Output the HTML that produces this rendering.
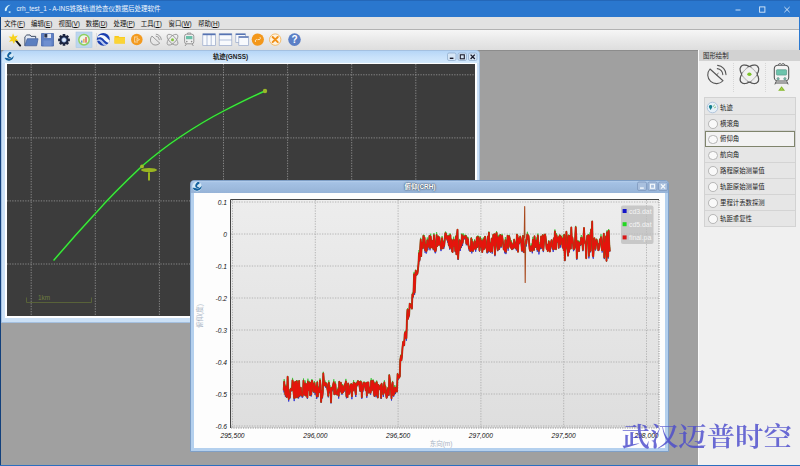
<!DOCTYPE html>
<html lang="zh">
<head>
<meta charset="utf-8">
<title>crh_test_1 - A-INS铁路轨道检查仪数据后处理软件</title>
<style>
html,body{margin:0;padding:0;}
body{width:800px;height:466px;position:relative;overflow:hidden;background:#a0a0a0;
 font-family:"Liberation Sans","Noto Sans CJK SC",sans-serif;font-size:6.4px;color:#111;}
.abs{position:absolute;}
#titlebar{left:0;top:0;width:800px;height:17.4px;background:#2a77ce;border-top:1px solid #2467b8;box-sizing:border-box;color:#fff;}
#titlebar .t{position:absolute;left:16.5px;top:2.3px;color:#eef5fd;font-size:6.5px;line-height:12px;white-space:nowrap;letter-spacing:0px;}
#menubar{left:1px;top:17px;width:798px;height:12px;background:#e2e2e2;border-bottom:1px solid #b2b2b2;}
#menubar span{position:absolute;top:1px;line-height:12px;font-size:6.4px;white-space:nowrap;color:#111;}
#toolbar{left:1px;top:30px;width:798px;height:20px;background:linear-gradient(#f6f6f6,#e9e9e9 50%,#dedede);border-bottom:1px solid #8c8c8c;}
#leftedge{left:0;top:17px;width:1px;height:449px;background:#12407c;}
#rightedge{left:799px;top:17px;width:1px;height:449px;background:#2b79d1;}
#bottomedge{left:0;top:465px;width:800px;height:1px;background:#2b6fc0;}
#panel{left:698px;top:50px;width:101px;height:415px;background:#f0f0f0;border-left:1px solid #fafafa;}
#panel .hd{position:absolute;left:0;top:0;width:101px;height:11px;background:#d2d2d2;}
#panel .hd span{position:absolute;left:4px;top:0;line-height:11px;font-size:6.4px;color:#222;}
.list{position:absolute;left:5px;top:47px;width:92px;height:129.5px;background:#e6e6e6;border:1px solid #d2d2d2;box-sizing:border-box;}
.item{position:absolute;left:0;width:90px;height:15.9px;border-bottom:1px solid #d4d4d4;box-sizing:border-box;}
.item i{position:absolute;left:2.9px;top:3.3px;width:7.8px;height:7.8px;border-radius:50%;background:#f9f9f9;border:0.8px solid #b4b4b4;box-sizing:content-box;}
.item span{position:absolute;left:15px;top:0;line-height:15.9px;font-size:6.4px;white-space:nowrap;color:#222;}
.item.sel{background:#f2f2f2;outline:1px solid #7f846c;outline-offset:-1px;border-bottom:none;}
.win{box-sizing:border-box;}
</style>
</head>
<body>
<!-- main title bar -->
<div id="titlebar" class="abs">
 <svg class="abs" style="left:0;top:0" width="16" height="17" viewBox="0 0 16 17"><path d="M10.6 3.8 C6.4 4.4 4.2 7.4 5 10.2 L6.9 9.6 C6.6 7.6 7.8 5.4 10.6 3.8Z" fill="#d2f0fa"/><path d="M8.8 10.2 L10.8 10.6 L10.2 12.2 L8.6 11.6Z" fill="#bfe8f8"/></svg>
 <div class="t">crh_test_1 - A-INS铁路轨道检查仪数据后处理软件</div>
 <svg class="abs" style="left:730px;top:0" width="70" height="17" viewBox="0 0 70 17">
  <line x1="5.5" y1="9" x2="10.5" y2="9" stroke="#dcebfa" stroke-width="0.9"/>
  <rect x="29.6" y="5.9" width="5.3" height="5.3" fill="none" stroke="#dcebfa" stroke-width="0.9"/>
  <path d="M54.4 6 L59.6 11.2 M59.6 6 L54.4 11.2" stroke="#dcebfa" stroke-width="0.9" fill="none"/>
 </svg>
</div>
<div id="leftedge" class="abs"></div>
<div id="rightedge" class="abs"></div>

<!-- menu bar -->
<div id="menubar" class="abs">
 <span style="left:3.2px">文件(<u>F</u>)</span>
 <span style="left:30.0px">编辑(<u>E</u>)</span>
 <span style="left:57.5px">视图(<u>V</u>)</span>
 <span style="left:84.8px">数据(<u>D</u>)</span>
 <span style="left:112.5px">处理(<u>P</u>)</span>
 <span style="left:139.8px">工具(<u>T</u>)</span>
 <span style="left:167.5px">窗口(<u>W</u>)</span>
 <span style="left:197.0px">帮助(<u>H</u>)</span>
</div>

<!-- toolbar -->
<div id="toolbar" class="abs">
<svg class="abs" style="left:-1px;top:0" width="320" height="19" viewBox="0 30 320 19">
 <!-- wand -->
 <path d="M15.5 40 L20.2 45.6" stroke="#111" stroke-width="1.9" stroke-linecap="round"/>
 <path transform="translate(2 0.8)" d="M11 32.5 L12.3 35.8 L15.8 34.6 L13.8 37.6 L16.5 40 L13 40 L12 43.2 L10.4 40.2 L7 41 L9 38.2 L6.6 35.6 L10 36Z" fill="#f7d21c"/>
 <!-- open folder -->
 <g transform="translate(0 0.6) translate(31 40) scale(0.94) translate(-31 -40)"><path d="M24.5 45.5 L24.5 36 L26.5 34 L30 34 L31 35.5 L36 35.5 L36 38" fill="#e4eaf4" stroke="#36445e" stroke-width="1"/>
 <path d="M24.5 45.5 L27 38 L38.5 38 L37 45.5Z" fill="#5b7fc0" stroke="#46629c" stroke-width="0.8"/></g>
 <!-- floppy -->
 <path d="M41.5 33.5 L53.5 33.5 L53.5 46 L41.5 46Z" fill="#5f80c4" stroke="#4768ac" stroke-width="0.8"/>
 <rect x="44" y="33.8" width="7" height="4.2" fill="#dfe6f4"/>
 <rect x="44.3" y="34" width="3" height="3.6" fill="#2a3552"/>
 <rect x="43.5" y="40.5" width="8" height="5.3" fill="#6f8fd0"/>
 <!-- gear -->
 <g transform="translate(64 39.9) scale(0.84)">
  <g fill="#1c2540">
   <rect x="-1.6" y="-7" width="3.2" height="14" rx="0.6"/>
   <rect x="-1.6" y="-7" width="3.2" height="14" rx="0.6" transform="rotate(45)"/>
   <rect x="-1.6" y="-7" width="3.2" height="14" rx="0.6" transform="rotate(90)"/>
   <rect x="-1.6" y="-7" width="3.2" height="14" rx="0.6" transform="rotate(135)"/>
   <circle r="5.3"/>
  </g>
  <circle r="2.7" fill="#dfeaf8"/>
  <circle r="2.7" fill="none" stroke="#7fa0d8" stroke-width="0.8"/>
 </g>
 <!-- chart (checked) -->
 <rect x="76" y="32" width="16" height="15.5" fill="#bcd6ee" stroke="#a9c8e6" stroke-width="0.6"/>
 <circle cx="84" cy="39.7" r="5.2" fill="#eef6e6" stroke="#8fd060" stroke-width="1.5"/>
 <rect x="81.2" y="40.5" width="1.2" height="2.2" fill="#4a78c8"/>
 <rect x="83.3" y="38.8" width="1.2" height="3.9" fill="#e8a030"/>
 <rect x="85.4" y="37" width="1.2" height="5.7" fill="#d84040"/>
 <line x1="96.5" y1="33" x2="96.5" y2="47" stroke="#dcdcdc" stroke-width="1"/>
 <!-- globe -->
 <circle cx="103.3" cy="39.3" r="6.4" fill="#1b3fb0"/>
 <path d="M97.6 36.6 C100 34 104 34.6 106.2 37 C107.6 38.5 108.8 39.6 109.6 40.2 C109.4 41.4 109 42.3 108.6 43 C106.4 42.4 104.8 40.6 103.4 39 C101.8 37.2 99.6 36.6 97.6 37.8Z" fill="#f4f7fc"/>
 <path d="M97 40 C99.4 38.6 101.4 39.6 102.8 41.2 C104 42.6 105.4 44 107 44.6 C106.2 45.2 105.4 45.5 104.6 45.6 C102.6 44.6 101.6 43 100.4 41.8 C99.4 40.8 98 40.6 97 41.2Z" fill="#b8c8f0"/>
 <!-- yellow folder -->
 <path d="M114.5 36 L118.5 36 L119.5 37 L125 37 L125 43.5 L114.5 43.5Z" fill="#f9c916"/>
 <rect x="114.5" y="37.6" width="10.5" height="5.9" fill="#fbd435"/>
 <!-- orange circle -->
 <circle cx="136.8" cy="39.5" r="5.8" fill="#f39a1e"/>
 <path d="M134.6 36.6 L134.6 42.4 M134.6 37 L138 37 M134.6 42 L138 42 M137 38.4 L139.6 39.6 L137 41Z" stroke="#fbe0b0" stroke-width="0.8" fill="none"/>
 <!-- dish -->
 <g stroke="#8c8c8c" fill="none" stroke-width="0.85" stroke-linecap="round" transform="translate(155.6 39.9) scale(0.6) translate(-716.5 -74.9)">
  <path d="M710 69 A8.76 8.76 0 0 0 723 80.75 Z" stroke-width="1.4"/>
  <path d="M717.3 68.6 A6 6 0 0 1 722.8 74.6" stroke-width="1.4"/>
  <path d="M717.6 65.4 A9.2 9.2 0 0 1 726 74.6" stroke-width="1.4"/>
 </g>
 <!-- target -->
 <g transform="translate(172.5 39.7)">
  <g fill="none" stroke="#909090" stroke-width="0.8">
   <ellipse rx="6.9" ry="3.3" transform="rotate(45)"/><ellipse rx="6.9" ry="3.3" transform="rotate(-45)"/>
  </g>
  <circle r="1.5" fill="#86c440"/>
 </g>
 <!-- train -->
 <g>
  <rect x="184.6" y="34.2" width="9.2" height="9.6" rx="2" fill="#efefef" stroke="#8c8c8c" stroke-width="0.9"/>
  <rect x="186" y="36" width="6.4" height="3.2" fill="#6cc0a8"/>
  <circle cx="186.8" cy="41.6" r="0.8" fill="#8c8c8c"/><circle cx="191.6" cy="41.6" r="0.8" fill="#8c8c8c"/>
  <path d="M186.4 44 L185 46 M192 44 L193.4 46" stroke="#8c8c8c" stroke-width="0.9"/>
  <path d="M187.6 34 L187.6 33 L190.8 33 L190.8 34" stroke="#8c8c8c" stroke-width="0.8" fill="none"/>
 </g>
 <!-- tile vertical -->
 <g stroke="#97a8ca" stroke-width="0.7" fill="#f8fafd">
  <rect x="202.8" y="33.8" width="12.6" height="11.8"/>
  <line x1="207" y1="35" x2="207" y2="45.6"/><line x1="211.2" y1="35" x2="211.2" y2="45.6"/>
 </g>
 <rect x="202.8" y="33.6" width="12.6" height="1.6" fill="#5673b2"/>
 <!-- tile horizontal -->
 <g stroke="#97a8ca" stroke-width="0.7" fill="#f8fafd">
  <rect x="219.2" y="33.8" width="12.6" height="11.8"/>
  <line x1="219.2" y1="40" x2="231.8" y2="40"/>
 </g>
 <rect x="219.2" y="33.6" width="12.6" height="1.6" fill="#5673b2"/>
 <!-- cascade -->
 <g stroke="#97a8ca" stroke-width="0.7" fill="#f8fafd">
  <rect x="235.8" y="33.8" width="9.6" height="8.6"/>
  <rect x="238.8" y="36.6" width="9.6" height="9"/>
 </g>
 <rect x="235.8" y="33.6" width="9.6" height="1.4" fill="#5673b2"/>
 <rect x="238.8" y="36.4" width="9.6" height="1.4" fill="#5673b2"/>
 <!-- link -->
 <circle cx="257.8" cy="39.6" r="6.1" fill="#f3971a"/>
 <path d="M255.6 42 C254.4 40.8 256.2 38.6 257.6 39.8 M260 37.2 C261.2 38.4 259.4 40.6 258 39.4" stroke="#fde6bc" stroke-width="1" fill="none"/>
 <!-- x -->
 <circle cx="275.2" cy="39.6" r="5.7" fill="#fdf3e2" stroke="#f4ae4c" stroke-width="0.8"/>
 <path d="M272.6 37 L277.8 42.2 M277.8 37 L272.6 42.2" stroke="#f09018" stroke-width="1.9" stroke-linecap="round"/>
 <!-- help -->
 <circle cx="294.5" cy="39.6" r="6.3" fill="#5b7fc6"/>
 <text x="294.5" y="43.2" text-anchor="middle" font-family="Liberation Sans, sans-serif" font-weight="bold" font-size="10" fill="#fff">?</text>
</svg>
</div>

<!-- GNSS window -->
<div class="abs win" style="left:1px;top:50px;width:479px;height:272.5px;background:#cbe0f6;border:1px solid #a4c0e0;border-radius:4px 4px 0 0;"></div>
<div class="abs" style="left:2px;top:51px;width:477px;height:12px;background:linear-gradient(#b6d6f7,#c8e1fa 50%,#d3e9fc);border-radius:3px 3px 0 0;"></div>
<div class="abs" style="left:5px;top:63px;width:472px;height:255px;background:#fff;"></div>
<div class="abs" style="left:6.5px;top:63.5px;width:468.5px;height:252.5px;background:#3c3c3c;"></div>
<div class="abs" style="left:0;top:51px;width:461px;height:12px;text-align:center;line-height:12px;font-size:6.4px;font-weight:bold;color:#222;">轨迹(GNSS)</div>
<svg class="abs" style="left:0;top:0" width="800" height="466" viewBox="0 0 800 466">
 <!-- gnss window icon -->
 <g transform="translate(8.9 56.6)">
  <circle r="4.8" fill="#d4e9f7"/>
  <path d="M-4.4 1.4 A4.8 4.8 0 0 0 4.7 -1 C3.6 1.4 1.2 2.4 -0.8 1.7 C-2.2 1.2 -3.3 1 -4.4 1.4Z" fill="#14619e"/>
  <path d="M0.6 -4.5 C2 -4.7 3.1 -3.9 2.5 -3.1 C1.7 -2.3 0.3 -2 0.1 -0.9 C-0.1 0.3 1.5 0.8 2.6 0.1 C1.9 1.7 -0.6 1.9 -1.5 0.4 C-2.4 -1.2 -0.9 -3.5 0.6 -4.5Z" fill="#14619e"/>
 </g>
 <!-- gnss window buttons -->
 <g>
  <rect x="447.5" y="53" width="8.5" height="7.5" rx="1.5" fill="#d6e6f6" stroke="#8aa8c8" stroke-width="0.7"/>
  <rect x="458" y="53" width="8.5" height="7.5" rx="1.5" fill="#d6e6f6" stroke="#8aa8c8" stroke-width="0.7"/>
  <rect x="468.5" y="53" width="8.5" height="7.5" rx="1.5" fill="#d6e6f6" stroke="#8aa8c8" stroke-width="0.7"/>
  <rect x="449.8" y="57.6" width="3.6" height="1.4" fill="#1a1a2a"/>
  <rect x="460.3" y="54.8" width="4" height="4" fill="none" stroke="#1a1a2a" stroke-width="1.1"/>
  <path d="M470.6 54.6 L474.8 59 M474.8 54.6 L470.6 59" stroke="#1a1a2a" stroke-width="1.3"/>
 </g>
 <!-- gnss grid -->
 <g stroke="#9a9a9a" stroke-width="0.8" stroke-dasharray="1.3 1.3" fill="none"><line x1="31.2" y1="64" x2="31.2" y2="316"/><line x1="95.3" y1="64" x2="95.3" y2="316"/><line x1="159.4" y1="64" x2="159.4" y2="316"/><line x1="223.5" y1="64" x2="223.5" y2="316"/><line x1="287.6" y1="64" x2="287.6" y2="316"/><line x1="351.7" y1="64" x2="351.7" y2="316"/><line x1="415.8" y1="64" x2="415.8" y2="316"/><line x1="7" y1="74.8" x2="475" y2="74.8"/><line x1="7" y1="137.9" x2="475" y2="137.9"/><line x1="7" y1="200.9" x2="475" y2="200.9"/><line x1="7" y1="264.0" x2="475" y2="264.0"/></g>
 <!-- scale bar -->
 <path d="M26.5 297.5 L26.5 302.5 L91.5 302.5 L91.5 297.5" stroke="#5f6c38" stroke-width="0.8" fill="none"/>
 <text x="38" y="299.6" font-size="6.4" fill="#6f7d40" font-family="Liberation Sans, sans-serif">1km</text>
 <!-- track -->
 <path d="M54 260 C66 246 82 228 94.4 214.6 C108 199 124 183 141.6 166.5 C156 154 168 145 180 137 C194 127.6 210 118 223.6 111 C236 104.6 252 96.5 265 91" stroke="#1c7a1c" stroke-width="2.4" fill="none" stroke-linecap="round" opacity="0.55"/>
 <path d="M54 260 C66 246 82 228 94.4 214.6 C108 199 124 183 141.6 166.5 C156 154 168 145 180 137 C194 127.6 210 118 223.6 111 C236 104.6 252 96.5 265 91" stroke="#3de63d" stroke-width="1.4" fill="none" stroke-linecap="round"/>
 <circle cx="265" cy="91" r="2.2" fill="#9ab828"/>
 <!-- marker -->
 <circle cx="142" cy="166.4" r="1.9" fill="#a2bc28"/>
 <ellipse cx="149" cy="170" rx="8" ry="2.1" fill="#9ab520"/>
 <rect x="148" y="172.3" width="2" height="8.2" fill="#9ab520"/>
</svg>

<!-- CRH window -->
<div class="abs win" style="left:190px;top:180px;width:479px;height:272px;background:#b4d0ee;border:1px solid #7f9fc6;border-radius:4px 4px 0 0;"></div>
<div class="abs" style="left:191px;top:181px;width:477px;height:12px;background:linear-gradient(#b6cfec 0,#a4c1e4 14%,#9dbadd 60%,#96b3d7 100%);border-radius:3px 3px 0 0;"></div>
<div class="abs" style="left:194px;top:193px;width:471px;height:255px;background:#fdfdfd;"></div>
<div class="abs" style="left:190px;top:181px;width:460px;height:12px;text-align:center;line-height:12px;font-size:6.4px;font-weight:bold;color:#fff;text-shadow:0 0 2px #345,0 0 1px #345;">俯仰(CRH)</div>
<svg class="abs" style="left:0;top:0" width="800" height="466" viewBox="0 0 800 466">
 <defs>
  <linearGradient id="pg" x1="0" y1="0" x2="0" y2="1"><stop offset="0" stop-color="#ededed"/><stop offset="1" stop-color="#dedede"/></linearGradient>
  <clipPath id="pc"><rect x="231" y="200" width="428" height="228"/></clipPath>
 </defs>
 <!-- icon -->
 <g transform="translate(197 186.6)">
  <circle r="4.8" fill="#d4e9f7"/>
  <path d="M-4.4 1.4 A4.8 4.8 0 0 0 4.7 -1 C3.6 1.4 1.2 2.4 -0.8 1.7 C-2.2 1.2 -3.3 1 -4.4 1.4Z" fill="#14619e"/>
  <path d="M0.6 -4.5 C2 -4.7 3.1 -3.9 2.5 -3.1 C1.7 -2.3 0.3 -2 0.1 -0.9 C-0.1 0.3 1.5 0.8 2.6 0.1 C1.9 1.7 -0.6 1.9 -1.5 0.4 C-2.4 -1.2 -0.9 -3.5 0.6 -4.5Z" fill="#14619e"/>
 </g>
 <!-- buttons (inactive) -->
 <g>
  <rect x="637.5" y="182" width="9" height="8.5" rx="1.5" fill="#a9c0de" stroke="#7d98be" stroke-width="0.8"/>
  <rect x="648" y="182" width="9" height="8.5" rx="1.5" fill="#a9c0de" stroke="#7d98be" stroke-width="0.8"/>
  <rect x="658.5" y="182" width="9" height="8.5" rx="1.5" fill="#a9c0de" stroke="#7d98be" stroke-width="0.8"/>
  <rect x="640" y="187.4" width="3.8" height="1.4" fill="#f4f8fc"/>
  <rect x="650.5" y="184.3" width="4" height="4" fill="none" stroke="#f4f8fc" stroke-width="1.1"/>
  <path d="M661 184.2 L665.2 188.6 M665.2 184.2 L661 188.6" stroke="#f4f8fc" stroke-width="1.3"/>
 </g>
 <!-- plot -->
 <rect x="231" y="200" width="428" height="228" fill="url(#pg)"/>
 <g stroke="#a8a8a8" stroke-width="0.8" stroke-dasharray="1.3 1.3" fill="none"><line x1="232.5" y1="200" x2="232.5" y2="428" /><line x1="315.3" y1="200" x2="315.3" y2="428" /><line x1="398.1" y1="200" x2="398.1" y2="428" /><line x1="480.9" y1="200" x2="480.9" y2="428" /><line x1="563.7" y1="200" x2="563.7" y2="428" /><line x1="646.5" y1="200" x2="646.5" y2="428" /><line x1="231" y1="202.0" x2="659" y2="202.0" /><line x1="231" y1="234.0" x2="659" y2="234.0" /><line x1="231" y1="266.0" x2="659" y2="266.0" /><line x1="231" y1="298.0" x2="659" y2="298.0" /><line x1="231" y1="330.0" x2="659" y2="330.0" /><line x1="231" y1="362.0" x2="659" y2="362.0" /><line x1="231" y1="394.0" x2="659" y2="394.0" /><line x1="231" y1="426.0" x2="659" y2="426.0" /></g>
 <path d="M231 428 L659 428 L659 200" fill="none" stroke="#777" stroke-width="0.8" stroke-dasharray="1.2 1.2"/>
 <path d="M230.5 428 L230.5 199.5 L659 199.5" fill="none" stroke="#444" stroke-width="1"/>
 <g font-family="Liberation Sans, sans-serif" font-style="italic" font-size="6.7" fill="#111"><text x="227" y="204.8" text-anchor="end">0.1</text><text x="227" y="236.8" text-anchor="end">0</text><text x="227" y="268.8" text-anchor="end">-0.1</text><text x="227" y="300.8" text-anchor="end">-0.2</text><text x="227" y="332.8" text-anchor="end">-0.3</text><text x="227" y="364.8" text-anchor="end">-0.4</text><text x="227" y="396.8" text-anchor="end">-0.5</text><text x="227" y="428.8" text-anchor="end">-0.6</text><text x="232.5" y="438" text-anchor="middle">295,500</text><text x="315.3" y="438" text-anchor="middle">296,000</text><text x="398.1" y="438" text-anchor="middle">296,500</text><text x="480.9" y="438" text-anchor="middle">297,000</text><text x="563.7" y="438" text-anchor="middle">297,500</text><text x="646.5" y="438" text-anchor="middle">298,000</text></g>
 <text transform="translate(202 316) rotate(-90)" text-anchor="middle" font-size="6.5" fill="#a9b4c4">俯仰(度)</text>
 <text x="441" y="446" text-anchor="middle" font-size="6.5" fill="#a9b4c4">东向(m)</text>
 <g clip-path="url(#pc)">
  <polyline points="283.7,392.5 284.2,382.0 284.8,389.5 285.4,396.7 285.9,388.3 286.5,397.7 287.0,397.1 287.6,377.5 288.1,389.1 288.7,401.5 289.2,394.8 289.8,398.8 290.3,390.7 290.9,391.7 291.4,390.7 292.0,390.5 292.5,382.7 293.1,383.2 293.6,392.4 294.2,401.1 294.7,386.0 295.3,382.4 295.8,397.7 296.4,383.8 296.9,383.1 297.5,398.1 298.0,387.2 298.6,398.5 299.1,382.7 299.7,397.1 300.2,394.0 300.8,390.3 301.3,396.7 301.9,397.0 302.4,397.8 303.0,397.0 303.5,381.3 304.1,393.7 304.6,395.0 305.2,385.4 305.7,395.8 306.3,394.3 306.8,387.0 307.4,398.9 307.9,382.1 308.5,390.6 309.0,389.4 309.6,384.4 310.1,395.4 310.7,384.4 311.2,396.5 311.8,382.6 312.3,381.5 312.9,387.6 313.4,392.7 314.0,386.7 314.5,386.4 315.1,394.9 315.6,391.7 316.2,388.1 316.7,398.9 317.3,383.2 317.8,397.3 318.4,388.9 318.9,389.6 319.5,393.1 320.0,382.2 320.6,386.3 321.1,402.6 321.7,393.3 322.2,398.6 322.8,394.3 323.3,375.9 323.9,382.9 324.4,385.4 325.0,383.0 325.5,387.6 326.1,385.1 326.6,385.5 327.2,387.7 327.7,391.6 328.3,397.4 328.8,382.8 329.4,393.3 329.9,389.0 330.5,388.2 331.0,403.4 331.6,388.6 332.1,391.4 332.7,388.4 333.2,384.6 333.8,384.6 334.3,394.0 334.9,393.8 335.4,384.0 336.0,394.9 336.5,394.3 337.1,395.4 337.6,392.9 338.2,390.7 338.7,398.6 339.3,381.9 339.8,392.3 340.4,388.5 340.9,384.6 341.5,393.6 342.0,394.8 342.6,387.9 343.1,392.9 343.7,389.0 344.2,391.8 344.8,386.0 345.3,387.2 345.9,383.0 346.4,398.3 347.0,387.8 347.5,396.6 348.1,383.9 348.6,385.8 349.2,393.6 349.7,393.9 350.3,389.0 350.8,385.5 351.4,386.8 351.9,399.2 352.5,388.2 353.0,390.5 353.6,384.2 354.1,390.5 354.7,385.0 355.2,391.6 355.8,397.0 356.3,386.1 356.9,386.6 357.4,384.6 358.0,383.0 358.5,384.8 359.1,383.5 359.6,388.5 360.2,391.9 360.7,384.8 361.3,384.5 361.8,398.8 362.4,388.3 362.9,392.2 363.5,382.3 364.0,387.4 364.6,384.8 365.1,386.9 365.7,390.5 366.2,386.3 366.8,397.8 367.3,384.6 367.9,386.8 368.4,385.2 369.0,393.2 369.5,389.1 370.1,390.4 370.6,394.7 371.2,380.8 371.7,391.2 372.3,389.3 372.8,382.5 373.4,382.1 373.9,394.8 374.5,396.7 375.0,385.6 375.6,390.5 376.1,397.2 376.7,383.8 377.2,388.3 377.8,397.7 378.3,387.2 378.9,389.4 379.4,389.7 380.0,386.9 380.5,386.2 381.1,399.0 381.6,385.7 382.2,391.4 382.7,388.7 383.3,396.9 383.8,388.0 384.4,381.8 384.9,392.9 385.5,389.7 386.0,394.6 386.6,398.2 387.1,396.9 387.7,391.6 388.2,390.1 388.8,396.1 389.3,377.8 389.9,381.8 390.4,390.6 391.0,391.4 391.5,400.5 392.1,385.4 392.6,384.1 393.2,395.8 393.7,396.7 394.3,393.0 394.8,387.8 395.4,394.0 395.9,392.0 396.5,389.7 397.0,391.7 397.6,374.9 398.1,380.0 398.7,378.2 399.2,377.7 399.8,376.7 400.3,359.8 400.9,357.5 401.4,360.6 402.0,356.4 402.5,348.8 403.1,342.3 403.6,343.9 404.2,345.6 404.7,336.4 405.3,335.0 405.8,335.8 406.4,340.7 406.9,320.1 407.5,310.3 408.0,319.2 408.6,317.7 409.1,316.9 409.7,305.9 410.2,306.1 410.8,306.5 411.3,307.4 411.9,308.1 412.4,297.0 413.0,297.9 413.5,295.0 414.1,276.8 414.6,294.8 415.2,282.8 415.7,270.9 416.3,275.1 416.8,275.5 417.4,274.0 417.9,269.9 418.5,265.2 419.0,253.7 419.6,261.5 420.1,254.3 420.7,242.2 421.2,255.6 421.8,243.8 422.3,243.6 422.9,249.1 423.4,237.7 424.0,244.2 424.5,238.0 425.1,252.8 425.6,244.8 426.2,253.6 426.7,252.3 427.3,240.4 427.8,250.1 428.4,246.8 428.9,242.5 429.5,237.0 430.0,250.3 430.6,238.8 431.1,243.2 431.7,247.7 432.2,244.7 432.8,240.9 433.3,250.3 433.9,234.8 434.4,240.0 435.0,253.2 435.5,253.1 436.1,250.5 436.6,237.5 437.2,246.6 437.7,246.1 438.3,239.7 438.8,243.9 439.4,239.4 439.9,245.2 440.5,246.6 441.0,251.1 441.6,244.3 442.1,238.8 442.7,248.5 443.2,241.7 443.8,248.8 444.3,246.6 444.9,238.7 445.4,233.0 446.0,235.6 446.5,239.4 447.1,237.4 447.6,242.6 448.2,237.4 448.7,246.2 449.3,238.4 449.8,249.7 450.4,236.8 450.9,247.8 451.5,240.8 452.0,251.3 452.6,252.3 453.1,241.7 453.7,240.8 454.2,247.1 454.8,243.5 455.3,252.2 455.9,237.3 456.4,254.6 457.0,237.1 457.5,232.1 458.1,260.0 458.6,251.5 459.2,250.4 459.7,242.8 460.3,250.9 460.8,245.0 461.4,247.8 461.9,236.3 462.5,246.0 463.0,242.1 463.6,237.0 464.1,239.6 464.7,237.5 465.2,238.8 465.8,235.5 466.3,245.3 466.9,239.3 467.4,245.0 468.0,241.7 468.5,245.3 469.1,250.7 469.6,247.3 470.2,250.6 470.7,250.2 471.3,240.4 471.8,253.4 472.4,243.1 472.9,251.2 473.5,250.7 474.0,247.9 474.6,244.1 475.1,248.7 475.7,251.7 476.2,248.4 476.8,237.8 477.3,247.7 477.9,236.1 478.4,242.7 479.0,244.1 479.5,251.7 480.1,240.4 480.6,244.3 481.2,249.6 481.7,241.2 482.3,252.5 482.8,247.6 483.4,242.3 483.9,249.0 484.5,246.7 485.0,238.0 485.6,242.1 486.1,247.5 486.7,250.7 487.2,253.5 487.8,239.1 488.3,252.6 488.9,235.1 489.4,251.3 490.0,244.1 490.5,252.6 491.1,251.3 491.6,240.2 492.2,253.7 492.7,245.9 493.3,237.3 493.8,245.1 494.4,236.3 494.9,256.2 495.5,246.0 496.0,237.3 496.6,236.2 497.1,244.9 497.7,251.2 498.2,237.9 498.8,241.0 499.3,250.0 499.9,236.3 500.4,237.6 501.0,248.0 501.5,240.6 502.1,237.7 502.6,241.0 503.2,245.5 503.7,249.6 504.3,248.8 504.8,253.3 505.4,240.6 505.9,254.1 506.5,247.1 507.0,247.3 507.6,236.0 508.1,250.7 508.7,240.4 509.2,236.1 509.8,241.2 510.3,247.1 510.9,247.8 511.4,244.5 512.0,249.3 512.5,244.8 513.1,249.4 513.6,247.0 514.2,239.6 514.7,242.4 515.3,248.9 515.8,245.4 516.4,250.6 516.9,236.9 517.5,236.8 518.0,251.9 518.6,241.2 519.1,244.4 519.7,242.0 520.2,238.4 520.8,240.5 521.3,244.4 521.9,251.4 522.4,251.8 523.0,236.2 523.5,249.7 524.1,252.7 524.6,247.7 525.2,245.6 525.7,241.4 526.3,246.5 526.8,238.8 527.4,234.8 527.9,239.6 528.5,236.9 529.0,242.3 529.6,249.1 530.1,251.1 530.7,251.5 531.2,246.4 531.8,249.2 532.3,253.3 532.9,241.3 533.4,247.4 534.0,250.1 534.5,236.2 535.1,244.7 535.6,248.0 536.2,245.5 536.7,242.5 537.3,251.8 537.8,237.8 538.4,243.4 538.9,254.4 539.5,249.1 540.0,245.9 540.6,249.2 541.1,237.5 541.7,248.6 542.2,247.9 542.8,237.3 543.3,252.1 543.9,243.6 544.4,237.7 545.0,235.7 545.5,238.9 546.1,243.2 546.6,249.4 547.2,244.9 547.7,250.4 548.3,250.8 548.8,243.3 549.4,246.9 549.9,251.9 550.5,245.4 551.0,244.4 551.6,241.9 552.1,249.2 552.7,246.8 553.2,251.9 553.8,239.0 554.3,249.6 554.9,231.7 555.4,246.2 556.0,248.7 556.5,237.2 557.1,242.3 557.6,242.7 558.2,239.7 558.7,248.5 559.3,238.5 559.8,236.6 560.4,247.6 560.9,238.5 561.5,241.4 562.0,241.4 562.6,248.4 563.1,238.4 563.7,250.6 564.2,236.3 564.8,261.1 565.3,252.0 565.9,246.5 566.4,235.0 567.0,246.6 567.5,250.0 568.1,256.1 568.6,236.6 569.1,252.6 569.7,238.7 570.2,237.3 570.8,249.0 571.3,229.6 571.9,243.5 572.4,237.0 573.0,244.8 573.5,251.2 574.1,250.0 574.6,249.0 575.2,240.3 575.7,230.5 576.3,238.8 576.8,259.8 577.4,249.6 577.9,241.5 578.5,244.2 579.0,251.5 579.6,242.1 580.1,245.0 580.7,245.9 581.2,238.2 581.8,239.3 582.3,244.1 582.9,251.2 583.4,241.6 584.0,229.2 584.5,240.7 585.1,242.3 585.6,244.4 586.2,258.0 586.7,242.7 587.3,236.0 587.8,241.1 588.4,236.8 588.9,258.4 589.5,242.3 590.0,235.0 590.6,252.4 591.1,232.2 591.7,236.4 592.2,223.1 592.8,257.3 593.3,258.7 593.9,246.3 594.4,239.3 595.0,245.0 595.5,250.5 596.1,243.4 596.6,242.6 597.2,244.2 597.7,242.9 598.3,250.4 598.8,250.9 599.4,246.4 599.9,240.4 600.5,244.0 601.0,239.4 601.6,247.5 602.1,252.5 602.7,251.3 603.2,240.4 603.8,235.2 604.3,259.1 604.9,243.9 605.4,250.1 606.0,239.3 606.5,261.4 607.1,232.5 607.6,251.0 608.2,258.6 608.7,231.3 609.3,246.7 609.8,252.0" fill="none" stroke="#2a2ad0" stroke-width="0.9" stroke-linejoin="round"/>
  <polyline points="283.7,387.3 284.2,379.2 284.8,389.2 285.4,394.7 285.9,384.6 286.5,394.2 287.0,394.5 287.6,376.4 288.1,384.9 288.7,397.0 289.2,393.0 289.8,397.1 290.3,389.2 290.9,387.9 291.4,387.2 292.0,387.1 292.5,377.9 293.1,381.9 293.6,391.3 294.2,397.8 294.7,383.4 295.3,381.5 295.8,396.7 296.4,381.4 296.9,380.0 297.5,394.0 298.0,383.0 298.6,394.9 299.1,380.7 299.7,396.0 300.2,391.2 300.8,388.1 301.3,393.2 301.9,392.7 302.4,394.0 303.0,393.9 303.5,378.5 304.1,390.4 304.6,392.2 305.2,380.5 305.7,394.0 306.3,391.9 306.8,383.7 307.4,394.3 307.9,378.7 308.5,389.8 309.0,387.4 309.6,380.9 310.1,394.0 310.7,382.3 311.2,393.3 311.8,379.0 312.3,380.1 312.9,385.1 313.4,390.7 314.0,383.2 314.5,381.0 315.1,391.6 315.6,389.9 316.2,383.9 316.7,394.6 317.3,380.8 317.8,396.3 318.4,387.5 318.9,386.0 319.5,391.4 320.0,378.3 320.6,385.4 321.1,398.8 321.7,391.0 322.2,394.5 322.8,389.6 323.3,371.8 323.9,380.9 324.4,383.9 325.0,380.5 325.5,385.3 326.1,382.4 326.6,382.9 327.2,385.3 327.7,389.6 328.3,396.3 328.8,380.3 329.4,389.1 329.9,385.2 330.5,388.0 331.0,400.3 331.6,387.4 332.1,387.6 332.7,386.7 333.2,384.4 333.8,379.3 334.3,393.6 334.9,392.2 335.4,381.5 336.0,393.9 336.5,393.7 337.1,391.7 337.6,390.7 338.2,387.2 338.7,396.1 339.3,381.0 339.8,391.0 340.4,384.4 340.9,383.3 341.5,389.6 342.0,393.3 342.6,384.1 343.1,392.0 343.7,387.6 344.2,388.6 344.8,384.4 345.3,384.1 345.9,378.9 346.4,395.0 347.0,387.0 347.5,393.6 348.1,383.4 348.6,385.7 349.2,392.6 349.7,390.2 350.3,386.8 350.8,384.7 351.4,383.4 351.9,396.6 352.5,384.2 353.0,387.9 353.6,380.1 354.1,385.4 354.7,382.0 355.2,387.4 355.8,392.4 356.3,382.5 356.9,385.0 357.4,380.5 358.0,380.3 358.5,384.2 359.1,381.0 359.6,384.2 360.2,390.5 360.7,380.4 361.3,381.9 361.8,395.9 362.4,385.8 362.9,387.0 363.5,381.8 364.0,384.5 364.6,381.6 365.1,386.2 365.7,388.8 366.2,383.3 366.8,395.1 367.3,382.4 367.9,386.0 368.4,382.8 369.0,390.9 369.5,387.1 370.1,386.4 370.6,389.8 371.2,378.2 371.7,390.5 372.3,387.0 372.8,379.8 373.4,379.7 373.9,391.5 374.5,393.4 375.0,381.8 375.6,389.1 376.1,393.5 376.7,380.5 377.2,388.8 377.8,397.8 378.3,384.3 378.9,389.2 379.4,385.8 380.0,386.6 380.5,385.7 381.1,397.2 381.6,383.2 382.2,388.2 382.7,387.3 383.3,392.9 383.8,387.0 384.4,380.3 384.9,391.5 385.5,384.8 386.0,391.7 386.6,396.4 387.1,395.2 387.7,389.0 388.2,386.9 388.8,394.5 389.3,374.6 389.9,379.7 390.4,388.8 391.0,389.2 391.5,395.7 392.1,383.8 392.6,380.9 393.2,391.9 393.7,393.2 394.3,392.3 394.8,385.0 395.4,390.3 395.9,390.0 396.5,386.0 397.0,392.0 397.6,373.9 398.1,375.8 398.7,374.1 399.2,377.3 399.8,375.4 400.3,358.9 400.9,354.5 401.4,360.2 402.0,354.2 402.5,347.5 403.1,341.9 403.6,340.9 404.2,342.4 404.7,333.9 405.3,330.6 405.8,335.5 406.4,337.0 406.9,318.7 407.5,308.2 408.0,316.9 408.6,315.1 409.1,315.0 409.7,303.9 410.2,306.1 410.8,303.2 411.3,305.8 411.9,305.3 412.4,292.6 413.0,297.1 413.5,290.7 414.1,271.9 414.6,290.1 415.2,281.4 415.7,269.7 416.3,273.7 416.8,271.4 417.4,272.6 417.9,268.2 418.5,262.3 419.0,250.0 419.6,257.1 420.1,249.0 420.7,237.8 421.2,254.9 421.8,242.3 422.3,242.4 422.9,247.2 423.4,234.7 424.0,242.0 424.5,235.2 425.1,248.4 425.6,241.7 426.2,251.0 426.7,249.0 427.3,237.5 427.8,247.2 428.4,243.7 428.9,242.9 429.5,235.5 430.0,245.3 430.6,233.7 431.1,239.4 431.7,247.1 432.2,241.5 432.8,240.6 433.3,246.8 433.9,233.1 434.4,238.9 435.0,249.9 435.5,251.0 436.1,247.7 436.6,232.2 437.2,243.7 437.7,243.4 438.3,235.6 438.8,242.2 439.4,236.9 439.9,241.7 440.5,244.0 441.0,247.3 441.6,240.6 442.1,235.9 442.7,246.6 443.2,240.4 443.8,246.2 444.3,243.4 444.9,238.1 445.4,231.7 446.0,231.9 446.5,238.5 447.1,235.4 447.6,239.3 448.2,235.3 448.7,242.3 449.3,233.6 449.8,245.2 450.4,233.6 450.9,245.3 451.5,238.6 452.0,248.4 452.6,249.7 453.1,239.7 453.7,236.7 454.2,244.8 454.8,240.0 455.3,249.4 455.9,235.3 456.4,251.8 457.0,233.5 457.5,230.6 458.1,257.7 458.6,248.5 459.2,246.9 459.7,238.9 460.3,245.8 460.8,243.2 461.4,242.4 461.9,233.2 462.5,241.8 463.0,236.9 463.6,233.6 464.1,237.6 464.7,234.9 465.2,235.4 465.8,235.1 466.3,240.8 466.9,236.5 467.4,244.4 468.0,236.9 468.5,245.3 469.1,246.7 469.6,245.8 470.2,250.4 470.7,248.4 471.3,237.3 471.8,250.5 472.4,239.1 472.9,251.4 473.5,249.0 474.0,246.6 474.6,239.3 475.1,246.9 475.7,246.8 476.2,245.3 476.8,236.0 477.3,246.7 477.9,235.6 478.4,241.2 479.0,243.8 479.5,251.1 480.1,236.0 480.6,242.6 481.2,245.1 481.7,238.4 482.3,250.8 482.8,243.7 483.4,237.4 483.9,246.8 484.5,246.2 485.0,236.7 485.6,240.0 486.1,246.1 486.7,248.7 487.2,252.2 487.8,235.8 488.3,247.7 488.9,231.5 489.4,249.1 490.0,241.6 490.5,250.5 491.1,246.1 491.6,237.8 492.2,249.5 492.7,242.2 493.3,233.9 493.8,242.3 494.4,234.8 494.9,252.3 495.5,244.5 496.0,233.5 496.6,231.1 497.1,241.9 497.7,249.0 498.2,234.8 498.8,239.5 499.3,247.6 499.9,234.8 500.4,234.1 501.0,244.3 501.5,237.0 502.1,233.9 502.6,238.7 503.2,244.0 503.7,248.5 504.3,248.4 504.8,250.7 505.4,237.0 505.9,251.3 506.5,242.1 507.0,245.1 507.6,235.1 508.1,247.7 508.7,240.0 509.2,234.9 509.8,239.1 510.3,245.3 510.9,247.1 511.4,240.2 512.0,246.0 512.5,243.2 513.1,246.7 513.6,244.2 514.2,238.9 514.7,242.6 515.3,247.4 515.8,242.8 516.4,246.6 516.9,233.8 517.5,234.9 518.0,249.2 518.6,238.1 519.1,241.4 519.7,239.7 520.2,235.7 520.8,237.0 521.3,241.3 521.9,248.3 522.4,246.4 523.0,235.1 523.5,247.5 524.1,249.1 524.6,243.6 525.2,243.6 525.7,239.1 526.3,241.4 526.8,236.3 527.4,231.8 527.9,238.2 528.5,234.6 529.0,239.0 529.6,248.3 530.1,250.4 530.7,249.6 531.2,243.4 531.8,246.9 532.3,249.8 532.9,236.9 533.4,244.7 534.0,247.4 534.5,236.3 535.1,242.4 535.6,246.3 536.2,243.1 536.7,237.4 537.3,247.4 537.8,233.6 538.4,241.8 538.9,250.1 539.5,246.4 540.0,242.1 540.6,245.4 541.1,236.1 541.7,246.0 542.2,247.6 542.8,234.4 543.3,247.5 543.9,242.5 544.4,235.5 545.0,234.3 545.5,236.4 546.1,241.5 546.6,248.6 547.2,243.9 547.7,250.2 548.3,249.2 548.8,240.3 549.4,246.0 549.9,250.6 550.5,242.2 551.0,242.9 551.6,239.8 552.1,244.2 552.7,245.4 553.2,247.3 553.8,238.4 554.3,247.1 554.9,229.5 555.4,245.0 556.0,246.8 556.5,233.1 557.1,240.0 557.6,238.8 558.2,236.9 558.7,246.0 559.3,235.1 559.8,234.7 560.4,242.4 560.9,235.4 561.5,238.4 562.0,238.1 562.6,244.0 563.1,235.2 563.7,247.5 564.2,233.9 564.8,259.3 565.3,249.0 565.9,244.5 566.4,232.1 567.0,241.7 567.5,249.0 568.1,253.4 568.6,234.6 569.1,248.7 569.7,239.0 570.2,235.2 570.8,246.6 571.3,228.3 571.9,243.0 572.4,236.5 573.0,242.7 573.5,248.8 574.1,247.2 574.6,247.9 575.2,235.8 575.7,225.9 576.3,237.3 576.8,255.7 577.4,247.6 577.9,240.2 578.5,241.7 579.0,250.9 579.6,240.8 580.1,244.6 580.7,244.3 581.2,235.1 581.8,236.1 582.3,242.0 582.9,248.4 583.4,237.5 584.0,228.3 584.5,238.6 585.1,242.3 585.6,244.0 586.2,257.8 586.7,242.0 587.3,235.9 587.8,239.8 588.4,234.2 588.9,254.6 589.5,239.2 590.0,232.4 590.6,249.3 591.1,228.5 591.7,233.5 592.2,221.6 592.8,255.9 593.3,253.7 593.9,243.3 594.4,238.4 595.0,242.6 595.5,248.2 596.1,241.5 596.6,238.7 597.2,242.0 597.7,240.8 598.3,247.4 598.8,247.8 599.4,244.5 599.9,238.8 600.5,239.6 601.0,234.3 601.6,247.1 602.1,248.6 602.7,246.8 603.2,238.4 603.8,234.2 604.3,255.9 604.9,242.3 605.4,249.3 606.0,235.4 606.5,258.9 607.1,230.2 607.6,248.7 608.2,254.7 608.7,229.1 609.3,244.7 609.8,248.7" fill="none" stroke="#3cc83c" stroke-width="0.9" stroke-linejoin="round"/>
  <polyline points="283.7,390.4 284.2,381.8 284.8,389.2 285.4,394.5 285.9,386.8 286.5,396.8 287.0,396.9 287.6,376.7 288.1,386.8 288.7,399.0 289.2,393.9 289.8,397.4 290.3,389.8 290.9,388.9 291.4,389.0 292.0,390.4 292.5,380.4 293.1,382.8 293.6,392.4 294.2,398.0 294.7,383.0 295.3,381.8 295.8,397.5 296.4,382.0 296.9,381.2 297.5,397.2 298.0,383.9 298.6,396.4 299.1,380.9 299.7,395.3 300.2,391.6 300.8,387.6 301.3,394.7 301.9,395.2 302.4,395.9 303.0,393.6 303.5,380.6 304.1,393.1 304.6,394.7 305.2,383.4 305.7,395.5 306.3,394.2 306.8,384.3 307.4,397.4 307.9,381.5 308.5,390.2 309.0,389.7 309.6,382.8 310.1,395.1 310.7,383.2 311.2,394.3 311.8,381.0 312.3,381.0 312.9,386.8 313.4,391.3 314.0,386.1 314.5,383.1 315.1,392.2 315.6,390.8 316.2,386.5 316.7,396.3 317.3,382.4 317.8,396.2 318.4,388.1 318.9,388.2 319.5,392.1 320.0,380.4 320.6,385.3 321.1,401.9 321.7,391.3 322.2,397.4 322.8,392.0 323.3,373.4 323.9,381.9 324.4,385.2 325.0,382.6 325.5,385.9 326.1,383.4 326.6,383.9 327.2,388.2 327.7,390.7 328.3,395.6 328.8,382.6 329.4,390.5 329.9,388.0 330.5,388.9 331.0,402.3 331.6,387.8 332.1,389.8 332.7,387.4 333.2,384.7 333.8,382.2 334.3,394.3 334.9,393.0 335.4,384.2 336.0,393.8 336.5,393.5 337.1,394.4 337.6,391.8 338.2,389.2 338.7,395.7 339.3,381.7 339.8,391.2 340.4,386.1 340.9,382.7 341.5,392.3 342.0,393.1 342.6,385.8 343.1,392.1 343.7,388.3 344.2,390.2 344.8,384.5 345.3,384.3 345.9,381.5 346.4,396.1 347.0,386.7 347.5,397.1 348.1,383.5 348.6,385.3 349.2,393.9 349.7,391.7 350.3,388.9 350.8,384.5 351.4,384.3 351.9,396.1 352.5,385.1 353.0,390.6 353.6,382.7 354.1,387.8 354.7,383.5 355.2,390.1 355.8,394.4 356.3,383.6 356.9,385.7 357.4,382.5 358.0,381.2 358.5,384.3 359.1,382.0 359.6,386.9 360.2,390.7 360.7,381.6 361.3,383.5 361.8,397.1 362.4,385.7 362.9,390.0 363.5,382.6 364.0,385.7 364.6,383.0 365.1,386.3 365.7,390.3 366.2,383.2 366.8,395.5 367.3,382.4 367.9,386.5 368.4,382.4 369.0,392.7 369.5,388.0 370.1,389.7 370.6,392.7 371.2,380.9 371.7,390.4 372.3,388.2 372.8,380.7 373.4,381.8 373.9,393.2 374.5,396.0 375.0,383.4 375.6,389.2 376.1,394.9 376.7,382.1 377.2,388.1 377.8,397.5 378.3,384.9 378.9,389.4 379.4,388.3 380.0,387.3 380.5,385.3 381.1,397.7 381.6,383.8 382.2,388.6 382.7,388.7 383.3,394.2 383.8,387.2 384.4,382.5 384.9,392.5 385.5,386.9 386.0,394.0 386.6,397.8 387.1,396.4 387.7,389.8 388.2,387.9 388.8,394.7 389.3,375.3 389.9,380.7 390.4,388.9 391.0,389.1 391.5,398.2 392.1,384.9 392.6,382.5 393.2,395.1 393.7,394.7 394.3,393.2 394.8,387.4 395.4,391.7 395.9,389.3 396.5,387.6 397.0,391.5 397.6,374.0 398.1,377.7 398.7,375.9 399.2,377.7 399.8,376.2 400.3,360.3 400.9,356.0 401.4,360.3 402.0,355.7 402.5,347.6 403.1,342.0 403.6,341.6 404.2,345.3 404.7,334.1 405.3,332.2 405.8,335.9 406.4,338.2 406.9,319.8 407.5,309.7 408.0,318.9 408.6,315.6 409.1,315.5 409.7,303.6 410.2,305.5 410.8,305.2 411.3,307.1 411.9,308.6 412.4,294.4 413.0,296.4 413.5,293.0 414.1,274.3 414.6,292.4 415.2,282.6 415.7,270.6 416.3,274.9 416.8,273.3 417.4,273.7 417.9,270.1 418.5,264.0 419.0,253.2 419.6,259.9 420.1,251.0 420.7,239.7 421.2,256.1 421.8,242.7 422.3,243.9 422.9,247.9 423.4,235.9 424.0,243.6 424.5,237.7 425.1,250.1 425.6,244.4 426.2,251.2 426.7,250.3 427.3,240.3 427.8,247.1 428.4,244.8 428.9,243.3 429.5,235.9 430.0,248.0 430.6,236.4 431.1,240.8 431.7,247.4 432.2,241.8 432.8,240.8 433.3,248.7 433.9,235.2 434.4,240.0 435.0,251.0 435.5,251.1 436.1,248.9 436.6,235.0 437.2,246.1 437.7,243.3 438.3,236.6 438.8,244.7 439.4,237.5 439.9,244.3 440.5,244.7 441.0,248.7 441.6,241.8 442.1,238.3 442.7,248.4 443.2,242.2 443.8,246.4 444.3,244.9 444.9,237.4 445.4,233.1 446.0,233.9 446.5,238.3 447.1,236.5 447.6,240.3 448.2,236.2 448.7,244.8 449.3,236.2 449.8,247.7 450.4,235.2 450.9,247.7 451.5,239.9 452.0,251.0 452.6,252.0 453.1,241.3 453.7,239.6 454.2,245.8 454.8,241.3 455.3,250.9 455.9,236.7 456.4,254.3 457.0,234.8 457.5,229.7 458.1,258.7 458.6,250.1 459.2,250.0 459.7,240.4 460.3,248.1 460.8,242.6 461.4,245.6 461.9,234.9 462.5,242.8 463.0,240.0 463.6,236.3 464.1,237.6 464.7,236.8 465.2,237.8 465.8,235.8 466.3,243.2 466.9,237.9 467.4,244.3 468.0,239.2 468.5,245.6 469.1,248.5 469.6,247.1 470.2,251.0 470.7,250.5 471.3,238.5 471.8,250.2 472.4,241.9 472.9,251.0 473.5,249.2 474.0,247.6 474.6,241.3 475.1,248.5 475.7,248.9 476.2,246.6 476.8,237.6 477.3,246.9 477.9,236.6 478.4,243.0 479.0,243.3 479.5,250.5 480.1,238.0 480.6,242.9 481.2,246.9 481.7,241.0 482.3,252.0 482.8,245.9 483.4,239.5 483.9,249.4 484.5,246.7 485.0,236.7 485.6,240.3 486.1,247.6 486.7,249.1 487.2,252.0 487.8,236.8 488.3,250.4 488.9,232.6 489.4,250.8 490.0,243.1 490.5,251.6 491.1,248.7 491.6,238.8 492.2,251.5 492.7,243.6 493.3,234.9 493.8,245.4 494.4,234.1 494.9,254.6 495.5,245.0 496.0,235.3 496.6,232.9 497.1,243.3 497.7,249.9 498.2,237.2 498.8,239.2 499.3,248.8 499.9,235.8 500.4,235.1 501.0,246.1 501.5,239.3 502.1,235.9 502.6,239.8 503.2,244.1 503.7,249.4 504.3,248.2 504.8,250.8 505.4,240.1 505.9,251.8 506.5,244.7 507.0,246.4 507.6,235.6 508.1,247.9 508.7,239.5 509.2,236.3 509.8,238.9 510.3,246.7 510.9,247.8 511.4,242.5 512.0,249.2 512.5,244.8 513.1,248.0 513.6,247.1 514.2,239.8 514.7,242.5 515.3,247.7 515.8,243.7 516.4,248.7 516.9,234.7 517.5,235.8 518.0,251.8 518.6,238.4 519.1,243.1 519.7,241.6 520.2,236.6 520.8,239.8 521.3,242.4 521.9,250.6 522.4,249.5 523.0,235.9 523.5,248.9 524.1,252.4 524.6,245.1 525.2,245.8 525.7,241.2 526.3,243.7 526.8,238.7 527.4,234.4 527.9,238.7 528.5,235.9 529.0,241.2 529.6,248.9 530.1,250.8 530.7,249.7 531.2,246.1 531.8,248.2 532.3,251.0 532.9,239.6 533.4,244.7 534.0,249.9 534.5,236.3 535.1,242.6 535.6,246.9 536.2,243.7 536.7,240.4 537.3,249.4 537.8,235.5 538.4,243.4 538.9,250.9 539.5,247.3 540.0,244.6 540.6,246.1 541.1,236.5 541.7,247.6 542.2,247.5 542.8,235.2 543.3,250.3 543.9,242.9 544.4,236.2 545.0,234.4 545.5,236.5 546.1,242.4 546.6,248.8 547.2,244.8 547.7,251.0 548.3,249.8 548.8,241.5 549.4,247.4 549.9,251.5 550.5,244.6 551.0,242.4 551.6,240.1 552.1,246.8 552.7,246.6 553.2,249.4 553.8,238.2 554.3,248.6 554.9,231.5 555.4,246.3 556.0,249.2 556.5,235.2 557.1,241.5 557.6,241.3 558.2,237.5 558.7,247.6 559.3,237.1 559.8,235.5 560.4,244.4 560.9,236.6 561.5,239.7 562.0,239.4 562.6,247.3 563.1,238.2 563.7,250.3 564.2,235.0 564.8,260.2 565.3,250.7 565.9,244.6 566.4,231.8 567.0,245.2 567.5,248.7 568.1,255.6 568.6,235.8 569.1,251.5 569.7,238.9 570.2,235.8 570.8,248.6 571.3,227.4 571.9,242.8 572.4,237.6 573.0,242.5 573.5,248.9 574.1,248.9 574.6,247.6 575.2,239.2 575.7,227.3 576.3,237.0 576.8,258.3 577.4,248.0 577.9,241.5 578.5,243.6 579.0,251.0 579.6,242.7 580.1,244.5 580.7,244.4 581.2,237.8 581.8,238.3 582.3,242.7 582.9,249.8 583.4,240.5 584.0,228.0 584.5,239.7 585.1,243.0 585.6,244.2 586.2,258.2 586.7,242.9 587.3,235.7 587.8,239.6 588.4,235.3 588.9,255.8 589.5,241.4 590.0,235.4 590.6,250.8 591.1,229.7 591.7,235.6 592.2,221.5 592.8,255.6 593.3,256.2 593.9,244.6 594.4,238.2 595.0,243.0 595.5,248.9 596.1,242.3 596.6,239.8 597.2,243.5 597.7,243.7 598.3,250.2 598.8,249.7 599.4,246.1 599.9,239.4 600.5,241.5 601.0,237.1 601.6,247.6 602.1,250.3 602.7,248.9 603.2,240.2 603.8,233.6 604.3,257.5 604.9,243.1 605.4,249.0 606.0,236.6 606.5,260.8 607.1,232.1 607.6,250.7 608.2,256.5 608.7,230.7 609.3,245.2 609.8,251.3" fill="none" stroke="#7a5a18" stroke-width="1.9" stroke-linejoin="round"/>
  <polyline points="283.7,390.4 284.2,381.8 284.8,389.2 285.4,394.5 285.9,386.8 286.5,396.8 287.0,396.9 287.6,376.7 288.1,386.8 288.7,399.0 289.2,393.9 289.8,397.4 290.3,389.8 290.9,388.9 291.4,389.0 292.0,390.4 292.5,380.4 293.1,382.8 293.6,392.4 294.2,398.0 294.7,383.0 295.3,381.8 295.8,397.5 296.4,382.0 296.9,381.2 297.5,397.2 298.0,383.9 298.6,396.4 299.1,380.9 299.7,395.3 300.2,391.6 300.8,387.6 301.3,394.7 301.9,395.2 302.4,395.9 303.0,393.6 303.5,380.6 304.1,393.1 304.6,394.7 305.2,383.4 305.7,395.5 306.3,394.2 306.8,384.3 307.4,397.4 307.9,381.5 308.5,390.2 309.0,389.7 309.6,382.8 310.1,395.1 310.7,383.2 311.2,394.3 311.8,381.0 312.3,381.0 312.9,386.8 313.4,391.3 314.0,386.1 314.5,383.1 315.1,392.2 315.6,390.8 316.2,386.5 316.7,396.3 317.3,382.4 317.8,396.2 318.4,388.1 318.9,388.2 319.5,392.1 320.0,380.4 320.6,385.3 321.1,401.9 321.7,391.3 322.2,397.4 322.8,392.0 323.3,373.4 323.9,381.9 324.4,385.2 325.0,382.6 325.5,385.9 326.1,383.4 326.6,383.9 327.2,388.2 327.7,390.7 328.3,395.6 328.8,382.6 329.4,390.5 329.9,388.0 330.5,388.9 331.0,402.3 331.6,387.8 332.1,389.8 332.7,387.4 333.2,384.7 333.8,382.2 334.3,394.3 334.9,393.0 335.4,384.2 336.0,393.8 336.5,393.5 337.1,394.4 337.6,391.8 338.2,389.2 338.7,395.7 339.3,381.7 339.8,391.2 340.4,386.1 340.9,382.7 341.5,392.3 342.0,393.1 342.6,385.8 343.1,392.1 343.7,388.3 344.2,390.2 344.8,384.5 345.3,384.3 345.9,381.5 346.4,396.1 347.0,386.7 347.5,397.1 348.1,383.5 348.6,385.3 349.2,393.9 349.7,391.7 350.3,388.9 350.8,384.5 351.4,384.3 351.9,396.1 352.5,385.1 353.0,390.6 353.6,382.7 354.1,387.8 354.7,383.5 355.2,390.1 355.8,394.4 356.3,383.6 356.9,385.7 357.4,382.5 358.0,381.2 358.5,384.3 359.1,382.0 359.6,386.9 360.2,390.7 360.7,381.6 361.3,383.5 361.8,397.1 362.4,385.7 362.9,390.0 363.5,382.6 364.0,385.7 364.6,383.0 365.1,386.3 365.7,390.3 366.2,383.2 366.8,395.5 367.3,382.4 367.9,386.5 368.4,382.4 369.0,392.7 369.5,388.0 370.1,389.7 370.6,392.7 371.2,380.9 371.7,390.4 372.3,388.2 372.8,380.7 373.4,381.8 373.9,393.2 374.5,396.0 375.0,383.4 375.6,389.2 376.1,394.9 376.7,382.1 377.2,388.1 377.8,397.5 378.3,384.9 378.9,389.4 379.4,388.3 380.0,387.3 380.5,385.3 381.1,397.7 381.6,383.8 382.2,388.6 382.7,388.7 383.3,394.2 383.8,387.2 384.4,382.5 384.9,392.5 385.5,386.9 386.0,394.0 386.6,397.8 387.1,396.4 387.7,389.8 388.2,387.9 388.8,394.7 389.3,375.3 389.9,380.7 390.4,388.9 391.0,389.1 391.5,398.2 392.1,384.9 392.6,382.5 393.2,395.1 393.7,394.7 394.3,393.2 394.8,387.4 395.4,391.7 395.9,389.3 396.5,387.6 397.0,391.5 397.6,374.0 398.1,377.7 398.7,375.9 399.2,377.7 399.8,376.2 400.3,360.3 400.9,356.0 401.4,360.3 402.0,355.7 402.5,347.6 403.1,342.0 403.6,341.6 404.2,345.3 404.7,334.1 405.3,332.2 405.8,335.9 406.4,338.2 406.9,319.8 407.5,309.7 408.0,318.9 408.6,315.6 409.1,315.5 409.7,303.6 410.2,305.5 410.8,305.2 411.3,307.1 411.9,308.6 412.4,294.4 413.0,296.4 413.5,293.0 414.1,274.3 414.6,292.4 415.2,282.6 415.7,270.6 416.3,274.9 416.8,273.3 417.4,273.7 417.9,270.1 418.5,264.0 419.0,253.2 419.6,259.9 420.1,251.0 420.7,239.7 421.2,256.1 421.8,242.7 422.3,243.9 422.9,247.9 423.4,235.9 424.0,243.6 424.5,237.7 425.1,250.1 425.6,244.4 426.2,251.2 426.7,250.3 427.3,240.3 427.8,247.1 428.4,244.8 428.9,243.3 429.5,235.9 430.0,248.0 430.6,236.4 431.1,240.8 431.7,247.4 432.2,241.8 432.8,240.8 433.3,248.7 433.9,235.2 434.4,240.0 435.0,251.0 435.5,251.1 436.1,248.9 436.6,235.0 437.2,246.1 437.7,243.3 438.3,236.6 438.8,244.7 439.4,237.5 439.9,244.3 440.5,244.7 441.0,248.7 441.6,241.8 442.1,238.3 442.7,248.4 443.2,242.2 443.8,246.4 444.3,244.9 444.9,237.4 445.4,233.1 446.0,233.9 446.5,238.3 447.1,236.5 447.6,240.3 448.2,236.2 448.7,244.8 449.3,236.2 449.8,247.7 450.4,235.2 450.9,247.7 451.5,239.9 452.0,251.0 452.6,252.0 453.1,241.3 453.7,239.6 454.2,245.8 454.8,241.3 455.3,250.9 455.9,236.7 456.4,254.3 457.0,234.8 457.5,229.7 458.1,258.7 458.6,250.1 459.2,250.0 459.7,240.4 460.3,248.1 460.8,242.6 461.4,245.6 461.9,234.9 462.5,242.8 463.0,240.0 463.6,236.3 464.1,237.6 464.7,236.8 465.2,237.8 465.8,235.8 466.3,243.2 466.9,237.9 467.4,244.3 468.0,239.2 468.5,245.6 469.1,248.5 469.6,247.1 470.2,251.0 470.7,250.5 471.3,238.5 471.8,250.2 472.4,241.9 472.9,251.0 473.5,249.2 474.0,247.6 474.6,241.3 475.1,248.5 475.7,248.9 476.2,246.6 476.8,237.6 477.3,246.9 477.9,236.6 478.4,243.0 479.0,243.3 479.5,250.5 480.1,238.0 480.6,242.9 481.2,246.9 481.7,241.0 482.3,252.0 482.8,245.9 483.4,239.5 483.9,249.4 484.5,246.7 485.0,236.7 485.6,240.3 486.1,247.6 486.7,249.1 487.2,252.0 487.8,236.8 488.3,250.4 488.9,232.6 489.4,250.8 490.0,243.1 490.5,251.6 491.1,248.7 491.6,238.8 492.2,251.5 492.7,243.6 493.3,234.9 493.8,245.4 494.4,234.1 494.9,254.6 495.5,245.0 496.0,235.3 496.6,232.9 497.1,243.3 497.7,249.9 498.2,237.2 498.8,239.2 499.3,248.8 499.9,235.8 500.4,235.1 501.0,246.1 501.5,239.3 502.1,235.9 502.6,239.8 503.2,244.1 503.7,249.4 504.3,248.2 504.8,250.8 505.4,240.1 505.9,251.8 506.5,244.7 507.0,246.4 507.6,235.6 508.1,247.9 508.7,239.5 509.2,236.3 509.8,238.9 510.3,246.7 510.9,247.8 511.4,242.5 512.0,249.2 512.5,244.8 513.1,248.0 513.6,247.1 514.2,239.8 514.7,242.5 515.3,247.7 515.8,243.7 516.4,248.7 516.9,234.7 517.5,235.8 518.0,251.8 518.6,238.4 519.1,243.1 519.7,241.6 520.2,236.6 520.8,239.8 521.3,242.4 521.9,250.6 522.4,249.5 523.0,235.9 523.5,248.9 524.1,252.4 524.6,245.1 525.2,245.8 525.7,241.2 526.3,243.7 526.8,238.7 527.4,234.4 527.9,238.7 528.5,235.9 529.0,241.2 529.6,248.9 530.1,250.8 530.7,249.7 531.2,246.1 531.8,248.2 532.3,251.0 532.9,239.6 533.4,244.7 534.0,249.9 534.5,236.3 535.1,242.6 535.6,246.9 536.2,243.7 536.7,240.4 537.3,249.4 537.8,235.5 538.4,243.4 538.9,250.9 539.5,247.3 540.0,244.6 540.6,246.1 541.1,236.5 541.7,247.6 542.2,247.5 542.8,235.2 543.3,250.3 543.9,242.9 544.4,236.2 545.0,234.4 545.5,236.5 546.1,242.4 546.6,248.8 547.2,244.8 547.7,251.0 548.3,249.8 548.8,241.5 549.4,247.4 549.9,251.5 550.5,244.6 551.0,242.4 551.6,240.1 552.1,246.8 552.7,246.6 553.2,249.4 553.8,238.2 554.3,248.6 554.9,231.5 555.4,246.3 556.0,249.2 556.5,235.2 557.1,241.5 557.6,241.3 558.2,237.5 558.7,247.6 559.3,237.1 559.8,235.5 560.4,244.4 560.9,236.6 561.5,239.7 562.0,239.4 562.6,247.3 563.1,238.2 563.7,250.3 564.2,235.0 564.8,260.2 565.3,250.7 565.9,244.6 566.4,231.8 567.0,245.2 567.5,248.7 568.1,255.6 568.6,235.8 569.1,251.5 569.7,238.9 570.2,235.8 570.8,248.6 571.3,227.4 571.9,242.8 572.4,237.6 573.0,242.5 573.5,248.9 574.1,248.9 574.6,247.6 575.2,239.2 575.7,227.3 576.3,237.0 576.8,258.3 577.4,248.0 577.9,241.5 578.5,243.6 579.0,251.0 579.6,242.7 580.1,244.5 580.7,244.4 581.2,237.8 581.8,238.3 582.3,242.7 582.9,249.8 583.4,240.5 584.0,228.0 584.5,239.7 585.1,243.0 585.6,244.2 586.2,258.2 586.7,242.9 587.3,235.7 587.8,239.6 588.4,235.3 588.9,255.8 589.5,241.4 590.0,235.4 590.6,250.8 591.1,229.7 591.7,235.6 592.2,221.5 592.8,255.6 593.3,256.2 593.9,244.6 594.4,238.2 595.0,243.0 595.5,248.9 596.1,242.3 596.6,239.8 597.2,243.5 597.7,243.7 598.3,250.2 598.8,249.7 599.4,246.1 599.9,239.4 600.5,241.5 601.0,237.1 601.6,247.6 602.1,250.3 602.7,248.9 603.2,240.2 603.8,233.6 604.3,257.5 604.9,243.1 605.4,249.0 606.0,236.6 606.5,260.8 607.1,232.1 607.6,250.7 608.2,256.5 608.7,230.7 609.3,245.2 609.8,251.3" fill="none" stroke="#e4140c" stroke-width="1.35" stroke-linejoin="round"/>
  <path d="M524.2 238 L524.7 206.5 L525.2 282.5 L525.6 244" fill="none" stroke="#a8481c" stroke-width="1.1" stroke-linejoin="round"/>
 </g>
 <!-- legend -->
 <rect x="621" y="205.5" width="32.5" height="38.5" rx="2" fill="#bebebe" fill-opacity="0.78"/>
 <rect x="622.6" y="209" width="4" height="4" fill="#1414c8"/>
 <rect x="622.6" y="222.2" width="4" height="4" fill="#22d822"/>
 <rect x="622.6" y="235.4" width="4" height="4" fill="#d81818"/>
 <g font-family="Liberation Sans, sans-serif" font-size="6.9" fill="#f4f4f4">
  <text x="629" y="213.8">cd3.dat</text>
  <text x="629" y="227">cd5.dat</text>
  <text x="629" y="240.2">final.pa</text>
 </g>
</svg>

<!-- right panel -->
<div id="panel" class="abs">
 <div class="hd"><span>图形绘制</span></div>
 <svg class="abs" style="left:0;top:11px" width="101" height="36" viewBox="699 61 101 36">
  <g stroke="#cfcfcf" stroke-width="0.8" stroke-dasharray="1 1"><line x1="733.5" y1="63" x2="733.5" y2="93"/><line x1="765.5" y1="63" x2="765.5" y2="93"/></g>
  <!-- dish -->
  <g stroke="#565656" fill="none" stroke-width="1.1" stroke-linecap="round">
   <path d="M710 69 A8.76 8.76 0 0 0 723 80.75 Z" stroke-linejoin="round"/>
   <path d="M716.6 74.8 L718.2 73.4" stroke-width="0.9"/>
   <path d="M717.3 68.6 A6 6 0 0 1 722.8 74.6"/>
   <path d="M717.6 65.4 A9.2 9.2 0 0 1 726 74.6"/>
  </g>
  <!-- target -->
  <g transform="translate(749.4 74.3)">
   <mask id="mk1"><rect x="-12" y="-12" width="24" height="24" fill="#fff"/><circle r="7.4" fill="#000"/></mask>
   <g fill="none" stroke="#8c8c8c" stroke-width="0.6">
    <ellipse rx="11.5" ry="6.3" transform="rotate(45)"/><ellipse rx="11.5" ry="6.3" transform="rotate(-45)"/>
   </g>
   <g fill="none" stroke="#555" stroke-width="1.15" mask="url(#mk1)">
    <ellipse rx="11.5" ry="6.3" transform="rotate(45)"/><ellipse rx="11.5" ry="6.3" transform="rotate(-45)"/>
   </g>
   <ellipse rx="2.1" ry="1.8" fill="#7ec42c"/>
  </g>
  <!-- train -->
  <g transform="translate(-1.1 -1.2)">
   <rect x="775.4" y="66.4" width="14.4" height="15.8" rx="3.6" fill="#f4f4f4" stroke="#565656" stroke-width="1.1"/>
   <rect x="777.5" y="70.9" width="10.2" height="5.4" rx="0.8" fill="#6cc4ac" stroke="#4f8f80" stroke-width="0.6"/>
   <circle cx="779.2" cy="80" r="1.2" fill="#7cc0b0" stroke="#5a7a74" stroke-width="0.5"/><circle cx="786" cy="80" r="1.2" fill="#7cc0b0" stroke="#5a7a74" stroke-width="0.5"/>
   <path d="M777.4 82.4 L776 85.6 M787.8 82.4 L789.2 85.6 M776.6 84.2 L788.6 84.2" stroke="#565656" stroke-width="1" fill="none"/>
   <path d="M779.6 66.2 C779.6 64.4 781.4 64.2 782.6 65.6 C783.8 64.2 785.6 64.4 785.6 66.2" stroke="#565656" stroke-width="0.9" fill="none"/>
   <path d="M779.2 92 L782.7 87.4 L786.2 92Z" fill="#86b828"/>
   <path d="M781.4 90.8 L782.7 89.2 L784 90.8Z" fill="#b4d86c"/>
  </g>
 </svg>
 <div class="list">
  <div class="item" style="top:1.6px"><svg class="abs" style="left:1.2px;top:1.6px" width="13" height="13" viewBox="0 0 13 13"><circle cx="6.5" cy="6.5" r="5.3" fill="#e6f0f8" stroke="#a9bfd8" stroke-width="0.9"/><path d="M4.6 4 C6.3 4 6.8 5.7 5.8 6.9 L4.6 9 L3.4 6.9 C2.4 5.7 2.9 4 4.6 4Z" fill="#128090"/><path d="M7.2 5.4 L8.6 4 M8.4 6.8 L9.8 6" stroke="#5aa848" stroke-width="0.9"/></svg><span>轨迹</span></div>
  <div class="item" style="top:17.5px"><i></i><span>横滚角</span></div>
  <div class="item sel" style="top:33.4px"><i></i><span>俯仰角</span></div>
  <div class="item" style="top:49.3px"><i></i><span>航向角</span></div>
  <div class="item" style="top:65.2px"><i></i><span>路程原始测量值</span></div>
  <div class="item" style="top:81.1px"><i></i><span>轨距原始测量值</span></div>
  <div class="item" style="top:97.0px"><i></i><span>里程计丢数探测</span></div>
  <div class="item" style="top:112.9px"><i></i><span>轨距重复性</span></div>
 </div>
</div>
<div id="bottomedge" class="abs"></div>

<!-- watermark -->
<div class="abs" style="left:621.5px;top:416.6px;width:180px;height:40px;line-height:40px;font-family:'Liberation Serif','Noto Serif CJK SC',serif;font-weight:600;font-size:28.4px;color:rgba(74,74,204,0.82);white-space:nowrap;letter-spacing:0;transform:scaleY(0.92);transform-origin:50% 60%;">武汉迈普时空</div>
</body>
</html>
